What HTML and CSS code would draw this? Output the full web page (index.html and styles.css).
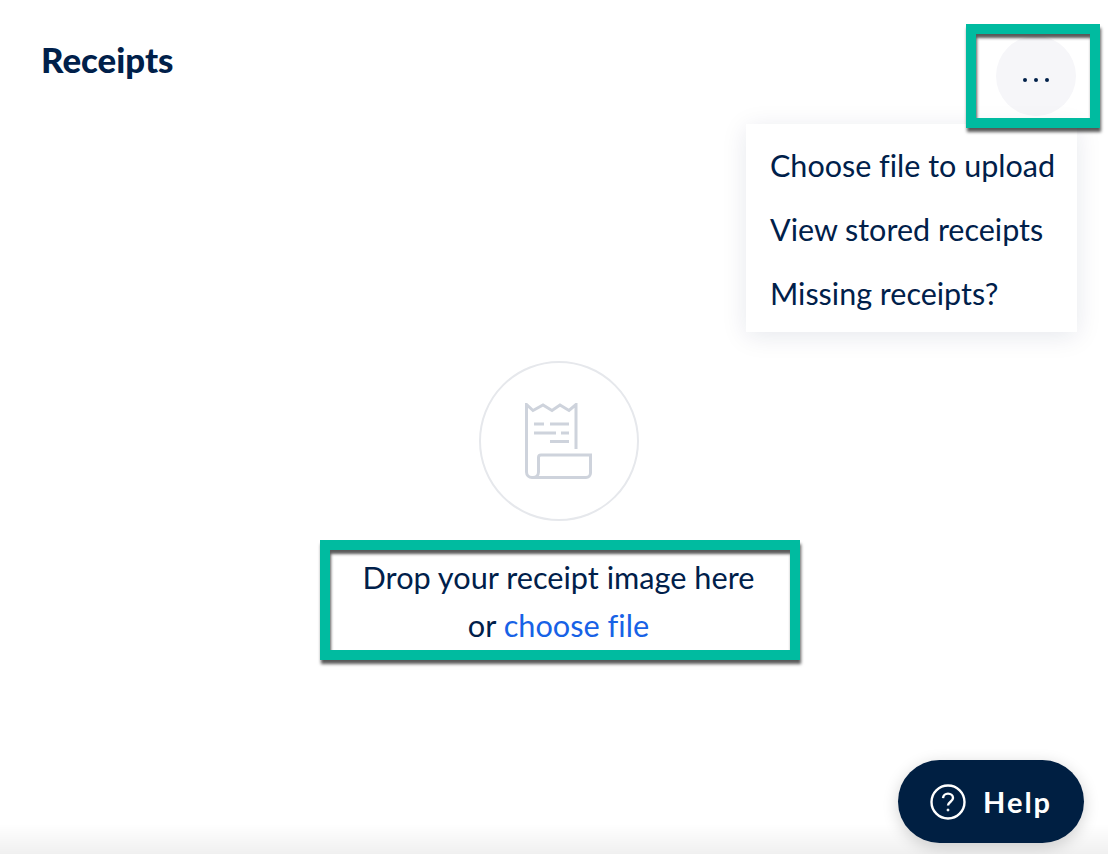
FILE: index.html
```html
<!DOCTYPE html>
<html lang="en">
<head>
    <meta charset="UTF-8">
    <meta name="viewport" content="width=device-width, initial-scale=1.0">
    <title>Receipts</title>
    <link rel="stylesheet" href="styles.css">
</head>
<body>
    <main class="page">
        <header class="top">
            <h1 class="title">Receipts</h1>
            <button class="moreBtn" aria-label="More">
                <span class="dot"></span><span class="dot"></span><span class="dot"></span>
            </button>
        </header>

        <nav class="menu">
            <a href="#">Choose file to upload</a>
            <a href="#">View stored receipts</a>
            <a href="#">Missing receipts?</a>
        </nav>

        <section class="drop">
            <div class="dropCircle">
                <svg width="67" height="76" viewBox="0 0 67 76" fill="none" stroke="#ced3dc" stroke-width="3">
                    <path d="M1.5 69V1.5L8 7.5l10-5.5 9 5.5 8-5.5 9 5.5 7-6V46"/>
                    <path d="M9 21h10M25 21h19M9 30h22M36 30h8M25 38.5h19"/>
                    <path d="M1.5 69a5.5 5.5 0 0 0 5.5 5.5h54a4.5 4.5 0 0 0 4.5-4.5V52H16a2.5 2.5 0 0 0-2.5 2.5V69a5.5 5.5 0 0 1-5.5 5.5"/>
                </svg>
            </div>
            <p class="dropText">Drop your receipt image here<br>or <a href="#">choose file</a></p>
        </section>

        <!-- green boxes drawn on top of the screenshot -->
        <div class="mark markMore"></div>
        <div class="mark markDrop"></div>

        <div class="bottomFade"></div>
        <button class="help">
            <svg width="36" height="36" viewBox="0 0 36 36" fill="none" stroke="#fff" stroke-width="2.4">
                <circle cx="18" cy="18" r="16.5"/>
                <path d="M13 14.2a5 5 0 0 1 5-4.6c2.8 0 5 1.9 5 4.4 0 3.6-5 3.8-5 7.6"/>
                <circle cx="18" cy="26" r="1" fill="#fff" stroke-width="1"/>
            </svg>
            <span>Help</span>
        </button>
    </main>
</body>
</html>
```

FILE: styles.css
```css
* {
    box-sizing: border-box;
}

html,body {
    margin: 0;
    height: 100%;
}

body {
    font-family: "Lato", "Liberation Sans", sans-serif;
    font-variant-ligatures: none;
    color: #00204a;
    background-color: #fff;
}

.page {
    position: relative;
    height: 854px;
    overflow: hidden;
}

.top {
    display: flex;
    justify-content: space-between;
    align-items: flex-start;
    padding: 35px 32px 0 41px;
}

.title {
    margin: 0;
    font-size: 34.8px;
    line-height: 50px;
    font-weight: 900;
}

.moreBtn {
    display: flex;
    justify-content: center;
    align-items: center;
    gap: 6.5px;
    width: 80px;
    height: 80px;
    margin-top: 1px;
    padding: 8px 0 0;
    border: none;
    border-radius: 50%;
    background-color: #f6f6f9;
}

.dot {
    width: 4.5px;
    height: 4.5px;
    border-radius: 50%;
    background-color: #00204a;
}

.menu {
    position: absolute;
    top: 124px;
    left: 746px;
    width: 331px;
    height: 208px;
    padding: 9px 0 0 24px;
    background-color: #fff;
    box-shadow: 0 4px 24px rgba(0, 32, 74, 0.1);
}

.menu a {
    display: block;
    font-size: 30.5px;
    line-height: 64px;
    color: #00204a;
    text-decoration: none;
    white-space: nowrap;
}

.drop {
    display: flex;
    flex-direction: column;
    align-items: center;
    width: 1117px;
    margin-top: 245px;
}

.dropCircle {
    display: flex;
    justify-content: center;
    align-items: center;
    width: 160px;
    height: 160px;
    border: 2px solid #e6e8ec;
    border-radius: 50%;
}

.dropText {
    margin: 33px 0 0;
    font-size: 30.7px;
    line-height: 48px;
    text-align: center;
}

.dropText a {
    color: #1762e6;
    text-decoration: none;
}

.mark {
    position: absolute;
    border: 10px solid #00bba0;
    box-shadow: 1px 4px 3px rgba(0, 0, 0, 0.65), inset 1px 4px 3px rgba(0, 0, 0, 0.65);
}

.markMore {
    top: 24px;
    left: 966px;
    width: 134px;
    height: 104px;
}

.markDrop {
    top: 540px;
    left: 320px;
    width: 480px;
    height: 120px;
}

.bottomFade {
    position: absolute;
    left: 0;
    right: 0;
    bottom: 0;
    height: 30px;
    background: linear-gradient(rgba(0, 0, 0, 0), rgba(0, 0, 0, 0.06));
}

.help {
    position: absolute;
    top: 760px;
    left: 898px;
    display: flex;
    align-items: center;
    gap: 17px;
    width: 186px;
    height: 83px;
    padding: 0 0 0 32px;
    border: none;
    border-radius: 42px;
    font-family: inherit;
    font-size: 29px;
    font-weight: 700;
    letter-spacing: 2px;
    color: #fff;
    background-color: #001f42;
    box-shadow: 0 4px 16px rgba(0, 0, 0, 0.18);
}
```
